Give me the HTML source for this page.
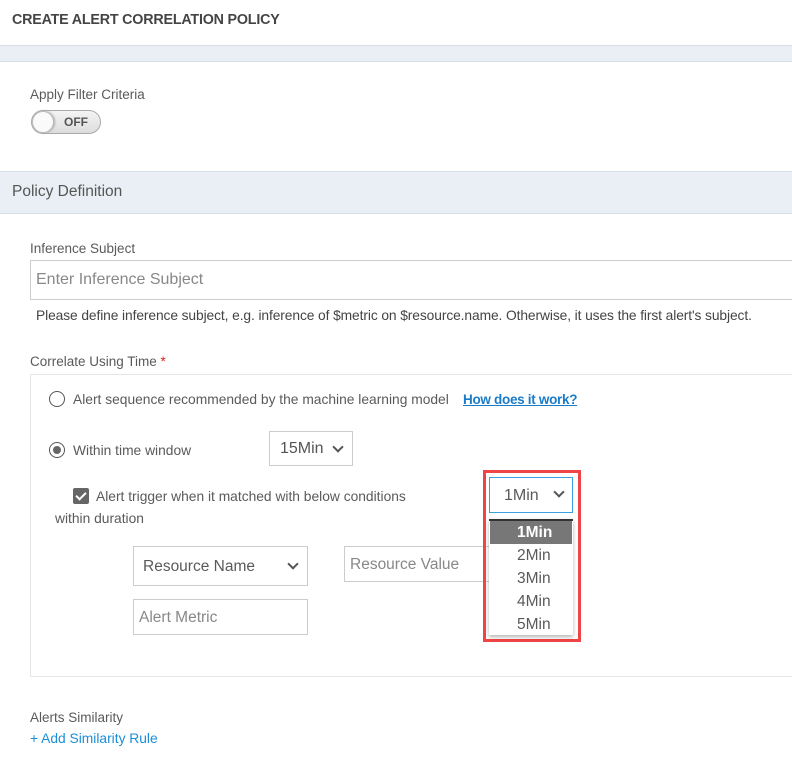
<!DOCTYPE html>
<html><head><meta charset="utf-8"><style>
*{box-sizing:border-box;margin:0;padding:0}
body{width:792px;height:772px;overflow:hidden;background:#fff;font-family:"Liberation Sans",sans-serif;color:#5a5a5a;position:relative}
.a{position:absolute;white-space:nowrap}
.sel{position:absolute;border:1px solid #ccc;background:#fff}
.chev{position:absolute;width:8px;height:8px;border-right:2px solid #555;border-bottom:2px solid #555;transform:rotate(45deg)}
</style></head><body>
<div class="a" style="left:12px;top:12px;font-size:14.3px;font-weight:bold;color:#444;letter-spacing:-0.2px">CREATE ALERT CORRELATION POLICY</div>
<div class="a" style="left:0;top:45px;width:792px;height:17px;background:#e9eff5;border-top:1px solid #d8dee5;border-bottom:1px solid #d8dee5"></div>
<div class="a" style="left:30px;top:87px;font-size:13.5px">Apply Filter Criteria</div>
<div class="a" style="left:31px;top:110px;width:70px;height:24px;border:1px solid #aaa;border-radius:12px;background:linear-gradient(#f4f4f4,#ddd)"></div>
<div class="a" style="left:32px;top:111px;width:22px;height:22px;border-radius:11px;background:#fafafa;border:1px solid #bbb;box-shadow:1px 0 2px #aaa"></div>
<div class="a" style="left:64px;top:115px;font-size:12px;font-weight:bold;color:#555">OFF</div>
<div class="a" style="left:0;top:171px;width:792px;height:43px;background:#e9eff5;border-top:1px solid #d8dee5;border-bottom:1px solid #d8dee5"></div>
<div class="a" style="left:12px;top:183px;font-size:15.5px;color:#555">Policy Definition</div>
<div class="a" style="left:30px;top:241px;font-size:13.5px">Inference Subject</div>
<div class="sel" style="left:30px;top:260px;width:770px;height:40px"></div>
<div class="a" style="left:36px;top:271px;font-size:16px;color:#888">Enter Inference Subject</div>
<div class="a" style="left:36px;top:308px;font-size:13.8px;color:#444;letter-spacing:-0.1px">Please define inference subject, e.g. inference of $metric on $resource.name. Otherwise, it uses the first alert's subject.</div>
<div class="a" style="left:30px;top:354px;font-size:13.5px">Correlate Using Time <span style="color:#d22">*</span></div>
<div class="a" style="left:30px;top:374px;width:770px;height:303px;border:1px solid #e6e6e6"></div>
<div class="a" style="left:49px;top:391px;width:16px;height:16px;border:1.5px solid #555;border-radius:50%"></div>
<div class="a" style="left:73px;top:392px;font-size:13.8px">Alert sequence recommended by the machine learning model</div>
<div class="a" style="left:463px;top:392px;font-size:13.5px;font-weight:bold;color:#1a7bc9;text-decoration:underline;letter-spacing:-0.3px">How does it work?</div>
<div class="a" style="left:49px;top:442px;width:16px;height:16px;border:1.5px solid #555;border-radius:50%"></div>
<div class="a" style="left:53px;top:446px;width:8px;height:8px;background:#666;border-radius:50%"></div>
<div class="a" style="left:73px;top:443px;font-size:13.8px">Within time window</div>
<div class="sel" style="left:269px;top:431px;width:84px;height:35px"></div>
<div class="a" style="left:280px;top:440px;font-size:16px;color:#555">15Min</div>
<div class="chev" style="left:334px;top:443px"></div>
<div class="a" style="left:73px;top:488px;width:16px;height:16px;background:#666;border-radius:2px"></div>
<div class="a" style="left:78px;top:490px;width:6px;height:10px;border-right:2px solid #fff;border-bottom:2px solid #fff;transform:rotate(45deg)"></div>
<div class="a" style="left:96px;top:489px;font-size:13.8px">Alert trigger when it matched with below conditions</div>
<div class="a" style="left:55px;top:511px;font-size:13.8px">within duration</div>
<div class="sel" style="left:133px;top:546px;width:175px;height:40px"></div>
<div class="a" style="left:143px;top:558px;font-size:15.5px">Resource Name</div>
<div class="chev" style="left:289px;top:560px"></div>
<div class="sel" style="left:344px;top:546px;width:150px;height:36px"></div>
<div class="a" style="left:350px;top:556px;font-size:15.5px;color:#888">Resource Value</div>
<div class="sel" style="left:133px;top:599px;width:175px;height:36px"></div>
<div class="a" style="left:139px;top:609px;font-size:15.5px;color:#888">Alert Metric</div>
<div class="a" style="left:483px;top:470px;width:98px;height:172px;border:3px solid #f04545"></div>
<div class="a" style="left:489px;top:477px;width:84px;height:36px;border:1px solid #3aa0e0;background:#fff"></div>
<div class="a" style="left:504px;top:487px;font-size:16px">1Min</div>
<div class="chev" style="left:555px;top:488px"></div>
<div class="a" style="left:489px;top:519px;width:84px;height:116px;background:#fff;border-top:2px solid #333;box-shadow:0 2px 4px rgba(0,0,0,.3)"></div>
<div class="a" style="left:490px;top:521px;width:82px;height:23px;background:#777"></div>
<div class="a" style="left:517px;top:524px;font-size:15.5px;color:#fff;font-weight:bold;line-height:17px">1Min</div>
<div class="a" style="left:517px;top:547px;font-size:15.5px;line-height:17px">2Min</div>
<div class="a" style="left:517px;top:570px;font-size:15.5px;line-height:17px">3Min</div>
<div class="a" style="left:517px;top:593px;font-size:15.5px;line-height:17px">4Min</div>
<div class="a" style="left:517px;top:616px;font-size:15.5px;line-height:17px">5Min</div>
<div class="a" style="left:30px;top:710px;font-size:13.5px">Alerts Similarity</div>
<div class="a" style="left:30px;top:731px;font-size:13.8px;color:#1a8fd8">+ Add Similarity Rule</div>
</body></html>
